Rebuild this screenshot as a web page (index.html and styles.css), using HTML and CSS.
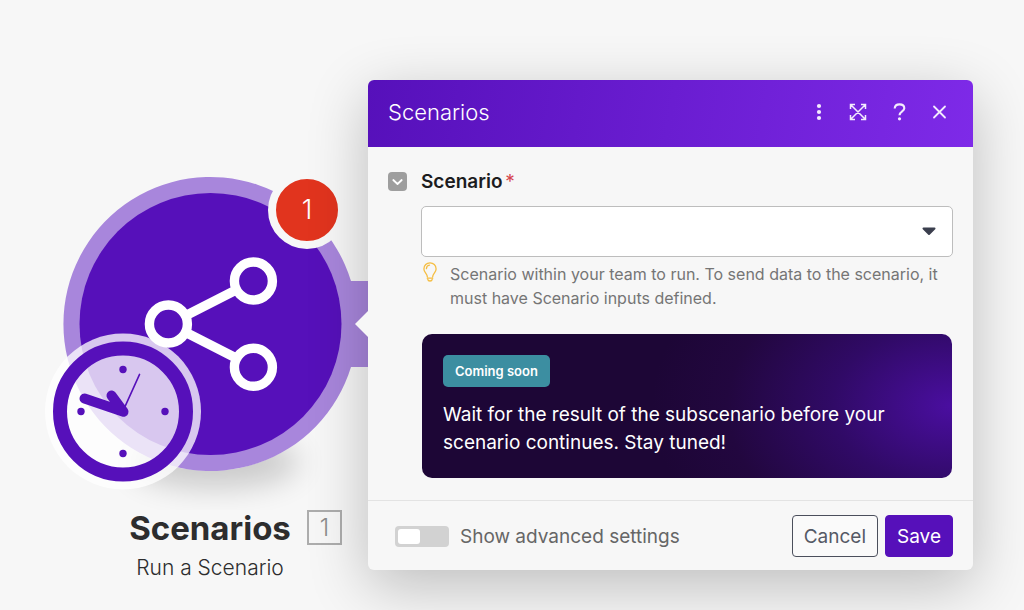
FILE: index.html
```html
<!DOCTYPE html>
<html lang="en">
<head>
  <meta charset="UTF-8" />
  <meta name="viewport" content="width=device-width, initial-scale=1.0"/>
  <title>Scenarios</title>
  <link rel="stylesheet" href="styles.css">
</head>
<body>
  <main class="canvas">
    <section class="module">
      <div class="module-figure">
        <svg class="module-art" viewBox="0 150 368 360" aria-hidden="true">
          <defs>
            <filter id="soft" x="-50%" y="-100%" width="200%" height="300%">
              <feGaussianBlur stdDeviation="15"/>
            </filter>
          </defs>
          <ellipse cx="215" cy="462" rx="84" ry="26" fill="#000" opacity="0.18" filter="url(#soft)"/>
          <circle cx="210" cy="324" r="147" fill="#f7f7f7"/>
          <!-- translucent halo with the connector ear -->
          <path d="M351 281H368V367H351A147 147 0 1 1 351 281Z" fill="#a886dc"/>
          <circle cx="210.500" cy="324" r="131" fill="#5610ba"/>
          <!-- share icon -->
          <g fill="none" stroke="#fff" stroke-width="9.400">
            <path d="M185 316L236 290M185 332L236 358"/>
            <circle cx="168.400" cy="324" r="19"/>
            <circle cx="253.400" cy="281" r="19"/>
            <circle cx="253.400" cy="367.300" r="19"/>
          </g>
          <!-- schedule clock -->
          <circle cx="123" cy="411.500" r="78" fill="#fff" opacity="0.770"/>
          <circle cx="123" cy="411.500" r="63" fill="none" stroke="#5610ba" stroke-width="14"/>
          <g fill="#5610ba">
            <circle cx="123" cy="369.500" r="3.700"/>
            <circle cx="165" cy="411.500" r="3.700"/>
            <circle cx="123" cy="453.500" r="3.700"/>
            <circle cx="81" cy="411.500" r="3.700"/>
          </g>
          <g fill="none" stroke="#5610ba" stroke-linecap="round" stroke-linejoin="round">
            <path d="M84.500 398.500L123.500 411.800L111.500 395.500" stroke-width="10"/>
            <path d="M123 411L139.500 374.500" stroke-width="1.700"/>
          </g>
        </svg>
        <span class="module-alert">1</span>
      </div>
      <div class="module-title">
        <h1>Scenarios</h1>
        <span class="module-order">1</span>
      </div>
      <p class="module-action">Run a Scenario</p>
    </section>

    <form class="panel">
      <header class="panel-header">
        <h2>Scenarios</h2>
        <div class="panel-tools">
          <button type="button" aria-label="More options">
            <svg width="20" height="20" viewBox="0 0 20 20" fill="currentColor"><circle cx="10" cy="4" r="2.100"/><circle cx="10" cy="10" r="2.100"/><circle cx="10" cy="16" r="2.100"/></svg>
          </button>
          <button type="button" aria-label="Expand">
            <svg width="20" height="20" viewBox="0 0 20 20" fill="none" stroke="currentColor" stroke-width="1.500"><path d="M1.500 7V2.500H6M12 2.500H16.500V7M16.500 13V17.500H12M6 17.500H1.500V13M2 3L16 17M16 3L2 17"/></svg>
          </button>
          <button type="button" aria-label="Help">
            <svg width="20" height="20" viewBox="0 0 20 20" fill="none" stroke="currentColor" stroke-width="2.100"><path d="M5.700 6.500C5.800 3.700 7.700 2.400 10.500 2.400C13.400 2.400 15.300 4 15.300 6.300C15.300 9.300 10.500 9.400 10.500 13.300"/><circle cx="10.500" cy="16.800" r="1.600" fill="currentColor" stroke="none"/></svg>
          </button>
          <button type="button" aria-label="Close">
            <svg width="20" height="20" viewBox="0 0 20 20" fill="none" stroke="currentColor" stroke-width="1.800" stroke-linecap="round"><path d="M5 4.500L16 15.500M16 4.500L5 15.500"/></svg>
          </button>
        </div>
      </header>

      <div class="panel-body">
        <button type="button" class="collapse-btn" aria-label="Collapse field">
          <svg width="19" height="19" viewBox="0 0 19 19" fill="none" stroke="#fff" stroke-width="1.800" stroke-linecap="round" stroke-linejoin="round"><path d="M5.300 8L9.500 12L13.700 8"/></svg>
        </button>
        <div class="field">
          <label for="scenario">Scenario <span class="required">*</span></label>
          <div class="select-box">
            <select id="scenario" name="scenario" required>
              <option value=""></option>
            </select>
            <svg class="select-arrow" width="14" height="9" viewBox="0 0 14 9" aria-hidden="true"><path d="M1.500 1.500H12.500L7 7Z" fill="#3b3f4e" stroke="#3b3f4e" stroke-width="2" stroke-linejoin="round"/></svg>
          </div>
          <div class="hint">
            <svg width="14" height="20" viewBox="0 0 14 20" fill="none" stroke="#f5bd41" stroke-width="1.300" stroke-linecap="round" aria-hidden="true"><path d="M4.300 14.800C4.300 11.600 0.900 10.500 0.900 6.900C0.900 3.400 3.600 0.900 7 0.900C10.400 0.900 13.100 3.400 13.100 6.900C13.100 10.500 9.700 11.600 9.700 14.800M4.300 16.200H9.700M4.800 17.300Q5 19 7 19Q9 19 9.200 17.300M3.400 6.600C3.500 4.700 4.800 3.400 6.500 3.200"/></svg>
            <p>Scenario within your team to run. To send data to the scenario, it must have Scenario inputs defined.</p>
          </div>
          <div class="promo">
            <span class="promo-tag">Coming soon</span>
            <p>Wait for the result of the subscenario before your scenario continues. Stay tuned!</p>
          </div>
        </div>
      </div>

      <footer class="panel-footer">
        <input type="checkbox" class="toggle" id="advanced" name="advanced">
        <label for="advanced">Show advanced settings</label>
        <button type="button" class="btn">Cancel</button>
        <button type="submit" class="btn btn-primary">Save</button>
      </footer>
    </form>
  </main>
</body>
</html>
```
FILE: styles.css
```css
/* Global Styling */
* {
  box-sizing: border-box;
  font-family: Inter, 'Open Sans', sans-serif;
}

body {
  margin: 0;
  background: #f7f7f7;
  color: #2d2d2e;
}

h1,
h2,
p {
  margin: 0;
}

button {
  padding: 0;
  border: none;
  cursor: pointer;
}

svg {
  display: block;
}

.canvas {
  display: grid;
  grid-template-columns: 368px 1fr;
  align-items: start;
  min-height: 100vh;
  padding-right: 51px;
  overflow: hidden;
}

/* Module on the canvas */
.module {
  padding-top: 150px;
}

.module-figure {
  position: relative;
}

.module-art {
  width: 100%;
}

.module-alert {
  position: absolute;
  left: 268px;
  top: 21px;
  width: 78px;
  height: 78px;
  border: 8px solid #f7f7f7;
  border-radius: 50%;
  background: #e1341e;
  color: #fff;
  font-size: 27px;
  font-weight: 300;
  line-height: 62px;
  text-align: center;
}

.module-title {
  display: grid;
  grid-template-columns: 1fr auto 1fr;
  align-items: center;
  gap: 16px;
  width: 420px;
}

.module-title h1 {
  grid-column: 2;
  font-size: 33px;
  line-height: 34px;
}

.module-order {
  width: 35px;
  border: 2px solid #adadad;
  color: #8c8c8c;
  font-size: 24px;
  font-weight: 300;
  line-height: 31px;
  text-align: center;
}

.module-action {
  width: 420px;
  margin-top: 10px;
  font-size: 21px;
  font-weight: 300;
  line-height: 26px;
  text-align: center;
}

/* Settings panel */
.panel {
  position: relative;
  margin-top: 80px;
  border-radius: 6px;
  background: #f7f7f7;
  box-shadow: 0 16px 60px rgba(0, 0, 0, 0.24);
}

/* Pointer towards the module */
.panel::before {
  content: "";
  position: absolute;
  left: -13px;
  top: 231px;
  border: 13px solid transparent;
  border-left: none;
  border-right-color: #f7f7f7;
}

.panel-header {
  display: flex;
  align-items: center;
  justify-content: space-between;
  height: 67px;
  padding: 0 24px 3px 20px;
  border-radius: 6px 6px 0 0;
  background: linear-gradient(100deg, #5610ba, #7e2ae8);
  color: #fff;
}

.panel-header h2 {
  font-size: 22px;
  font-weight: 300;
}

.panel-tools {
  display: flex;
  gap: 20px;
}

.panel-tools button {
  background: none;
  color: #f3ebfd;
}

.panel-body {
  display: flex;
  align-items: flex-start;
  gap: 14px;
  padding: 21px 20px 22px;
}

.collapse-btn {
  margin-top: 4px;
  border-radius: 4px;
  background: #9e9e9e;
}

.field {
  flex: 1;
}

.field label {
  display: block;
  margin-bottom: 10px;
  color: #1c1c1e;
  font-size: 19px;
  font-weight: 600;
  line-height: 28px;
}

.required {
  margin-left: -2px;
  color: #d64550;
  font-weight: 400;
}

.select-box {
  position: relative;
}

.select-box select {
  display: block;
  width: 100%;
  height: 51px;
  padding: 0 40px 0 16px;
  border: 1px solid #bdbdbd;
  border-radius: 5px;
  background: #fff;
  font-size: 18px;
  appearance: none;
}

.select-arrow {
  position: absolute;
  right: 17px;
  top: 21px;
  pointer-events: none;
}

.hint {
  display: flex;
  align-items: flex-start;
  gap: 13px;
  padding: 5px 0 0 2px;
  color: #757575;
  font-size: 16px;
  line-height: 24px;
}

.hint svg {
  flex: none;
}

.promo {
  margin: 24px 1px 0;
  padding: 21px;
  border-radius: 10px;
  background: radial-gradient(ellipse 300px 200px at 100% 50%, #4a0ea0, #300a66 40%, #22073f 75%, #1d0636);
  color: #fff;
  font-size: 19px;
  line-height: 28px;
}

.promo-tag {
  display: inline-block;
  margin-bottom: 14px;
  padding: 0 12px;
  border-radius: 5px;
  background: #3c8ea1;
  font-size: 13px;
  font-weight: 600;
  line-height: 32px;
  vertical-align: top;
}

.panel-footer {
  display: flex;
  align-items: center;
  gap: 7px;
  padding: 14px 20px 13px 27px;
  border-top: 1px solid #e3e3e3;
}

.panel-footer label {
  flex: 1;
  margin-left: 4px;
  color: #666;
  font-size: 19px;
}

.toggle {
  width: 54px;
  height: 21px;
  margin: 0;
  padding: 3px;
  border-radius: 4px;
  background: #d2d2d2;
  appearance: none;
  cursor: pointer;
}

.toggle::before {
  content: "";
  display: block;
  width: 22px;
  height: 15px;
  border-radius: 3px;
  background: #fff;
}

.toggle:checked::before {
  margin-left: auto;
}

.btn {
  height: 42px;
  padding: 0 11px;
  border: 1px solid #4b4f5c;
  border-radius: 4px;
  background: #fafafa;
  color: #555965;
  font-size: 19px;
}

.btn-primary {
  border-color: #5610ba;
  background: #5610ba;
  color: #fff;
}
```
